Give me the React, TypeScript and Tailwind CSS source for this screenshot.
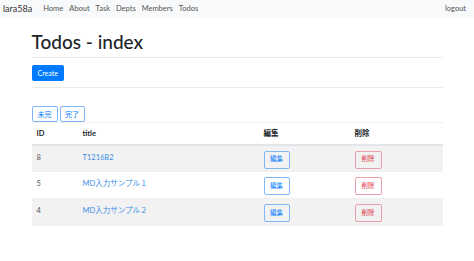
const FONT = "font-['Lato','Noto_Sans_CJK_JP',sans-serif]";

const navLinks = ['Home', 'About', 'Task', 'Depts', 'Members', 'Todos'];

const todos = [
  { id: 8, title: 'T1216B2' },
  { id: 5, title: 'MD入力サンプル１' },
  { id: 4, title: 'MD入力サンプル２' },
];

function Navbar() {
  return (
    <nav className="flex h-[18px] items-center bg-[#f8f9fa] pl-[3px] pr-[8px]">
      <span className="mr-[11px] text-[9px] text-[#333]">lara58a</span>
      <ul className="flex gap-[6px] text-[7.5px] text-[#555]">
        {navLinks.map((l) => (
          <li key={l}>{l}</li>
        ))}
      </ul>
      <span className="ml-auto text-[7.5px] text-[#555]">logout</span>
    </nav>
  );
}

export default function App() {
  return (
    <div className={`${FONT} min-h-[261px] bg-white text-[#212529]`}>
      <Navbar />
      <main className="mx-auto w-[411px] pt-[12px]">
        <h1 className="text-[19px] font-medium leading-[24px]">Todos - index</h1>
        <hr className="mt-[3px] border-[#e9ecef]" />
        <div className="flex pt-[7px] pb-[6px]">
          <button className="h-[16px] rounded-[2px] bg-[#007bff] px-[6px] text-[7px] leading-none text-white">
            Create
          </button>
        </div>
        <hr className="border-[#e9ecef]" />
        <div className="mt-[18px] flex gap-[2px]">
          <button className="h-[16px] w-[26px] rounded-[2px] border border-[#7fb6f5] text-[7px] leading-none text-[#007bff]">
            未完
          </button>
          <button className="h-[16px] w-[25px] rounded-[2px] border border-[#7fb6f5] text-[7px] leading-none text-[#007bff]">
            完了
          </button>
        </div>
        <table className="w-full table-fixed border-collapse text-[7.5px]">
          <colgroup>
            <col className="w-[46px]" />
            <col className="w-[181px]" />
            <col className="w-[91px]" />
            <col />
          </colgroup>
          <thead>
            <tr className="h-[22px] border-t border-b-2 border-t-[#eef0f2] border-b-[#e3e6e9] text-left">
              <th className="px-[5px] font-bold">ID</th>
              <th className="px-[5px] font-bold">title</th>
              <th className="px-[5px] font-bold">編集</th>
              <th className="px-[5px] font-bold">削除</th>
            </tr>
          </thead>
          <tbody>
            {todos.map((t, i) => (
              <tr
                key={t.id}
                className={`h-[27px] border-b border-[#eef0f2] ${i % 2 === 0 ? 'bg-[#f2f2f2]' : 'bg-white'}`}
              >
                <td className="px-[5px] pt-[6px] align-top text-[#555]">{t.id}</td>
                <td className="px-[5px] pt-[6px] align-top text-[#3a8ee6]">{t.title}</td>
                <td className="px-[5px] pt-[5px] align-top">
                  <button className="h-[18px] w-[26px] rounded-[2px] border border-[#7fb6f5] text-[6.5px] leading-none text-[#007bff]">
                    編集
                  </button>
                </td>
                <td className="px-[5px] pt-[5px] align-top">
                  <button className="h-[18px] w-[27px] rounded-[2px] border border-[#e8a0a8] text-[6.5px] leading-none text-[#dc3545]">
                    削除
                  </button>
                </td>
              </tr>
            ))}
          </tbody>
        </table>
      </main>
    </div>
  );
}
